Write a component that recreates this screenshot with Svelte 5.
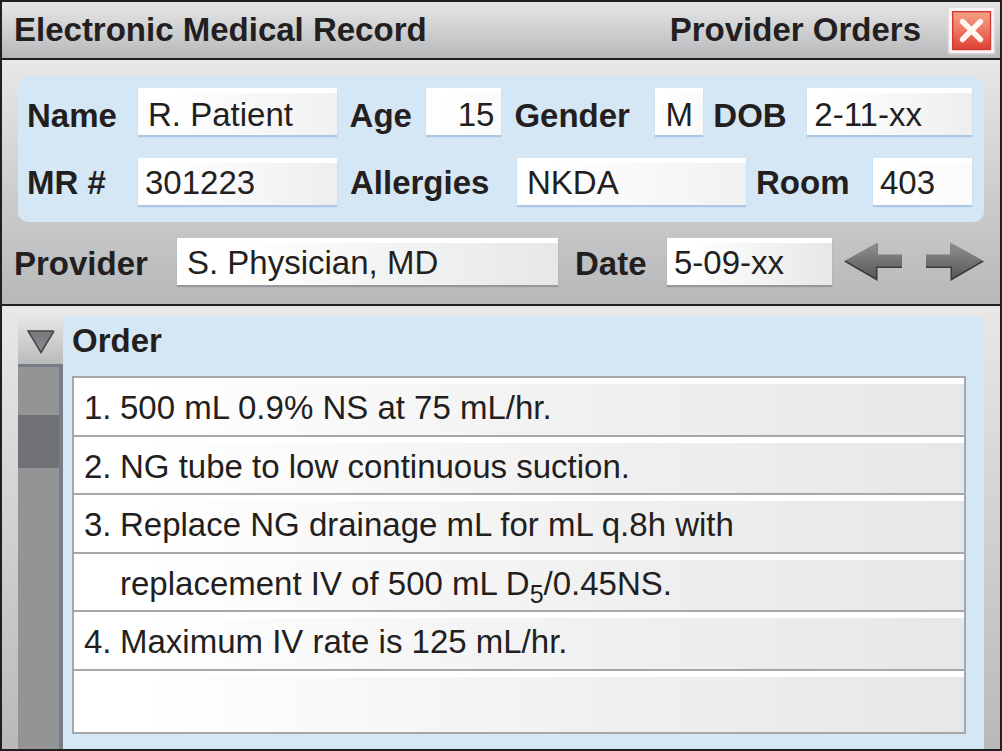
<script>
  const orders = [
    { number: '1.', text: '500 mL 0.9% NS at 75 mL/hr.' },
    { number: '2.', text: 'NG tube to low continuous suction.' },
    { number: '3.', text: 'Replace NG drainage mL for mL q.8h with' },
    { number: '', text: 'replacement IV of 500 mL D', sub: '5', rest: '/0.45NS.' },
    { number: '4.', text: 'Maximum IV rate is 125 mL/hr.' },
    { number: '', text: '' }
  ];
</script>

<main class="window">
  <header class="titlebar">
    <h1>Electronic Medical Record</h1>
    <h2>Provider Orders</h2>
    <button class="close" aria-label="Close">
      <svg viewBox="0 0 45 45" aria-hidden="true">
        <defs>
          <linearGradient id="red" x1="0" y1="0" x2="0" y2="1">
            <stop offset="0" stop-color="#f4a182" />
            <stop offset="0.5" stop-color="#ee7660" />
            <stop offset="1" stop-color="#dd4031" />
          </linearGradient>
        </defs>
        <rect width="45" height="45" rx="1" fill="#fbf3f3" />
        <rect x="3.7" y="3.7" width="37.8" height="37.8" fill="url(#red)" stroke="#d03c38" stroke-width="1.4" />
        <path d="M13.500 13.500 31.500 31.500M31.500 13.500 13.500 31.500" stroke="#fff7f2" stroke-width="5.4" stroke-linecap="round" />
      </svg>
    </button>
  </header>

  <section class="chart">
    <div class="patient">
      <div class="row first">
        <label for="name">Name</label>
        <input id="name" class="inset" value="R. Patient" readonly />
        <label for="age" class="wide">Age</label>
        <input id="age" class="plain end" value="15" readonly />
        <label for="gender" class="wide">Gender</label>
        <input id="gender" class="plain inset" value="M" readonly />
        <label for="dob" class="near">DOB</label>
        <input id="dob" class="pale" value="2-11-xx" readonly />
      </div>
      <div class="row second">
        <label for="mr">MR #</label>
        <input id="mr" class="pale" value="301223" readonly />
        <label for="allergies" class="wide">Allergies</label>
        <input id="allergies" class="inset" value="NKDA" readonly />
        <label for="room" class="near">Room</label>
        <input id="room" class="plain" value="403" readonly />
      </div>
    </div>
    <div class="row provider">
      <label for="provider">Provider</label>
      <input id="provider" class="inset deep" value="S. Physician, MD" readonly />
      <label for="date" class="far">Date</label>
      <input id="date" class="deep" value="5-09-xx" readonly />
      <nav>
        <button aria-label="Previous date">
          <svg width="58" height="40" viewBox="0 0 58 40" aria-hidden="true">
            <defs>
              <linearGradient id="steel" x1="0" y1="0" x2="0" y2="1">
                <stop offset="0" stop-color="#8f9092" />
                <stop offset="1" stop-color="#58595b" />
              </linearGradient>
            </defs>
            <path d="M0 19.500 33.500 1.500V13H58V26H33.500V39Z" fill="#3c3c3e" />
            <path d="M1.500 18.500 33.500 0.500V12.500H58V24.500H32V36Z" fill="url(#steel)" />
          </svg>
        </button>
        <button aria-label="Next date">
          <svg width="58" height="40" viewBox="0 0 58 40" aria-hidden="true">
            <path d="M58 19.500 24.500 1.500V13H0V26H24.500V39Z" fill="#3c3c3e" />
            <path d="M56.500 18.500 24.500 0.500V12.500H0V24.500H26V36Z" fill="url(#steel)" />
          </svg>
        </button>
      </nav>
    </div>
  </section>

  <section class="body">
    <div class="scroll">
      <button aria-label="Scroll down">
        <svg width="28" height="24" viewBox="0 0 28 24" aria-hidden="true">
          <defs>
            <linearGradient id="tri" x1="0" y1="0" x2="0" y2="1">
              <stop offset="0" stop-color="#77787b" />
              <stop offset="1" stop-color="#8a8b8d" />
            </linearGradient>
          </defs>
          <path d="M1.500 1H26.500L14 22Z" fill="url(#tri)" />
          <path d="M26.500 1H1L14 22.500 27 1" fill="none" stroke="#454547" stroke-width="1.500" />
        </svg>
      </button>
      <div class="track"><div class="thumb"></div></div>
    </div>
    <div class="orders">
      <h3>Order</h3>
      <ul>
        {#each orders as line}
          <li>
            <span>{line.number}</span>
            <span>{line.text}{#if line.sub}<sub>{line.sub}</sub>{line.rest}{/if}</span>
          </li>
        {/each}
      </ul>
    </div>
  </section>
</main>

<style>
  :global(body) {
    margin: 0;
  }

  .window {
    box-sizing: border-box;
    display: flex;
    flex-direction: column;
    min-height: 100vh;
    border: 2px solid #231f20;
    color: #231f20;
    font: 33px/48px "Liberation Sans", Arial, sans-serif;
    white-space: nowrap;
  }

  h1, h2, h3 {
    margin: 0;
    font-size: 33px;
    font-weight: 700;
  }

  button {
    display: block;
    padding: 0;
    border: 0;
    background: none;
  }

  svg {
    display: block;
  }

  .titlebar {
    display: flex;
    align-items: center;
    height: 56px;
    padding: 0 6px 0 12px;
    border-bottom: 2px solid #231f20;
    background: linear-gradient(#e6e6e7, #cfd0d1 50%, #b7b8ba);
  }

  .titlebar h2 {
    margin-left: auto;
  }

  .close {
    width: 45px;
    height: 45px;
    margin-left: 28px;
    box-shadow: 0 0 2px 1px #e9dcdd;
  }

  .chart {
    padding: 17px 16px 18px;
    border-bottom: 2px solid #231f20;
    background: linear-gradient(#e8e8e8, #cacbcd 58%, #b7b8ba);
  }

  .patient {
    padding: 11px 12px 16px 9px;
    border-radius: 10px;
    background: #d5e6f5;
  }

  .row {
    --drop: 0px;
    --edge: #a9c8e6;
    display: grid;
  }

  .first {
    --drop: 7px;
    grid-template-columns: 111px 199fr 89px 76fr 154px 48fr 104px 165fr;
    margin-bottom: 22px;
  }

  .second {
    --drop: 2px;
    grid-template-columns: 111px 199fr 180px 229fr 127px 99fr;
  }

  .provider {
    --drop: 3px;
    --edge: #97989b;
    grid-template-columns: 163px 381fr 109px 165fr 152px;
    margin: 16px 0 0 -4px;
  }

  label {
    padding-top: var(--drop);
    line-height: calc(48px - var(--drop));
    height: 48px;
    box-sizing: border-box;
    font-weight: 700;
  }

  .wide {
    padding-left: 13px;
  }

  .near {
    padding-left: 10px;
  }

  .far {
    padding-left: 17px;
  }

  input {
    --tone: #f1f1f2;
    box-sizing: border-box;
    width: 100%;
    min-width: 0;
    height: 48px;
    padding: var(--drop) 7px 0;
    border: 0;
    border-bottom: 1px solid var(--edge);
    border-radius: 0;
    outline: 0;
    background:
      linear-gradient(#fff, #fff) top / 100% 5px no-repeat,
      linear-gradient(90deg, #fff 15%, var(--tone));
    box-shadow: 0 1px 1px var(--edge);
    color: inherit;
    font: inherit;
  }

  .inset {
    padding-left: 10px;
  }

  .plain {
    --tone: #fafafa;
  }

  .pale {
    --tone: #eeeeef;
  }

  .deep {
    --tone: #e6e7e8;
  }

  .end {
    text-align: right;
  }

  nav {
    display: flex;
    justify-content: space-between;
    padding: 4px 0 0 12px;
  }

  nav button {
    height: 40px;
  }

  .body {
    display: flex;
    flex: 1;
    padding: 10px 16px 0;
    background: linear-gradient(#e8e8e8, #d0d1d2 50%, #b8b9bb);
  }

  .scroll {
    display: flex;
    flex-direction: column;
    width: 45px;
  }

  .scroll button {
    display: flex;
    justify-content: center;
    height: 48px;
    padding-top: 14px;
    box-sizing: border-box;
    background: linear-gradient(#e6e6e7, #b9babc);
  }

  .track {
    flex: 1;
    padding-top: 48px;
    border: solid #777d86;
    border-width: 3px 4px 0 0;
    background: #929496;
  }

  .thumb {
    height: 53px;
    background: #717275;
  }

  .orders {
    flex: 1;
    padding: 0 18px 15px 9px;
    border-top-right-radius: 10px;
    background: #d5e6f5;
  }

  h3 {
    padding-top: 1px;
  }

  ul {
    margin: 11px 0 0;
    padding: 0;
    border: solid #a5a7aa;
    border-width: 2px 2px 0;
    list-style: none;
  }

  li {
    box-sizing: border-box;
    display: grid;
    grid-template-columns: 36px 1fr;
    height: 59px;
    padding: 2px 10px 0;
    border-bottom: 2px solid #a5a7aa;
    background:
      linear-gradient(#fff, #fff) top / 100% 6px no-repeat,
      linear-gradient(90deg, #fff 8%, #f0f0f1 60%, #e6e7e8);
    line-height: 55px;
  }

  li:nth-child(even) {
    height: 58px;
  }

  li:last-child {
    height: 63px;
  }

  sub {
    font-size: 25px;
    line-height: 0;
    vertical-align: -8px;
  }
</style>
